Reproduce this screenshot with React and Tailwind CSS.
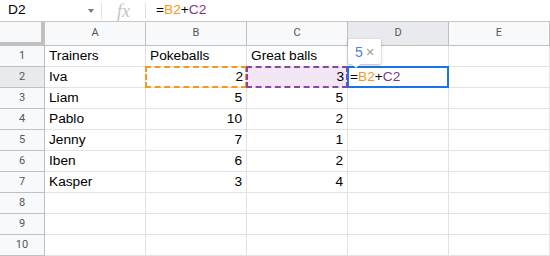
import React from "react";

const cols = ["A", "B", "C", "D", "E"];
const rows = [
  ["Trainers", "Pokeballs", "Great balls"],
  ["Iva", "2", "3"],
  ["Liam", "5", "5"],
  ["Pablo", "10", "2"],
  ["Jenny", "7", "1"],
  ["Iben", "6", "2"],
  ["Kasper", "3", "4"],
  [],
  [],
  [],
];

function Formula() {
  return (
    <span>
      =<span className="text-[#f7981d]">B2</span>+<span className="text-[#7e3794]">C2</span>
    </span>
  );
}

function Cell({ r, c, value }) {
  const numeric = r > 1 && c > 0 && c < 3;
  const base = "relative h-[21px] border-r border-b border-[#e2e2e3] text-[13.7px] leading-[20px] text-black";
  if (r === 2 && c === 1) {
    return (
      <div className={base}>
        <div className="absolute -left-px -top-px right-[-1px] bottom-[-1px] border-2 border-dashed border-[#f7981d] pr-[2px] text-right leading-[18px]">
          {value}
        </div>
      </div>
    );
  }
  if (r === 2 && c === 2) {
    return (
      <div className={base}>
        <div className="absolute -left-px -top-px right-[-1px] bottom-[-1px] border-2 border-dashed border-[#8e44a5] bg-[#f3e7f6] pr-[2px] text-right leading-[18px]">
          {value}
        </div>
      </div>
    );
  }
  if (r === 2 && c === 3) {
    return (
      <div className={base}>
        <div className="absolute -left-px -top-px right-[-1px] bottom-[-1px] z-10 border-2 border-[#1a73e8] bg-white pl-[1px] leading-[18px]">
          <Formula />
        </div>
        <div className="absolute left-0 top-[-28px] z-20 flex h-[25px] w-[33px] items-center gap-[3px] rounded-[2px] bg-white pl-[7px] text-[14px] shadow-[0_1px_3px_rgba(0,0,0,0.3)]">
          <span className="text-[#4a7fe0]">5</span>
          <span className="text-[15px] text-[#9aa0a6]">×</span>
          <div className="absolute left-[3px] top-[24px] h-0 w-0 border-x-[5px] border-t-[5px] border-x-transparent border-t-white" />
        </div>
      </div>
    );
  }
  return (
    <div className={`${base} ${numeric ? "pr-[4px] text-right" : "pl-[4px]"}`}>{value}</div>
  );
}

export default function App() {
  return (
    <div className="h-[256px] w-[550px] overflow-hidden bg-white font-['Liberation_Sans',Arial,sans-serif]">
      <div className="flex h-[22px] items-center border-b border-[#c7c7c7]">
        <div className="w-[88px] pl-[8px] text-[13.7px] text-black">D2</div>
        <div className="h-0 w-0 border-x-[3.5px] border-t-[4px] border-x-transparent border-t-[#7a7a7a]" />
        <div className="ml-[7px] h-[16px] w-px bg-[#e0e0e0]" />
        <div className="w-[43px] text-center font-['Liberation_Serif',serif] text-[18px] italic leading-none text-[#c4c4c4]">fx</div>
        <div className="h-[16px] w-px bg-[#e0e0e0]" />
        <div className="pl-[10px] text-[13.7px] text-black">
          <Formula />
        </div>
      </div>
      <div className="grid grid-cols-[45px_101px_101px_101px_101px_101px] grid-rows-[24px_repeat(10,21px)]">
        <div className="border-r-4 border-b-4 border-[#c0c0c0] bg-[#f8f9fa]" />
        {cols.map((c) => (
          <div
            key={c}
            className={`flex items-center justify-center border-r border-b border-[#c0c0c0] font-['Roboto',sans-serif] text-[11px] text-[#575757] ${c === "D" ? "bg-[#e8eaed]" : "bg-[#f8f9fa]"}`}
          >
            {c}
          </div>
        ))}
        {rows.map((row, i) => {
          const r = i + 1;
          return (
            <React.Fragment key={r}>
              <div
                className={`flex items-center justify-center border-r border-b border-[#c0c0c0] font-['Roboto',sans-serif] text-[11px] text-[#575757] ${r === 2 ? "bg-[#e8eaed]" : "bg-[#f8f9fa]"}`}
              >
                {r}
              </div>
              {cols.map((c, ci) => (
                <Cell key={c} r={r} c={ci} value={row[ci] || ""} />
              ))}
            </React.Fragment>
          );
        })}
      </div>
    </div>
  );
}
